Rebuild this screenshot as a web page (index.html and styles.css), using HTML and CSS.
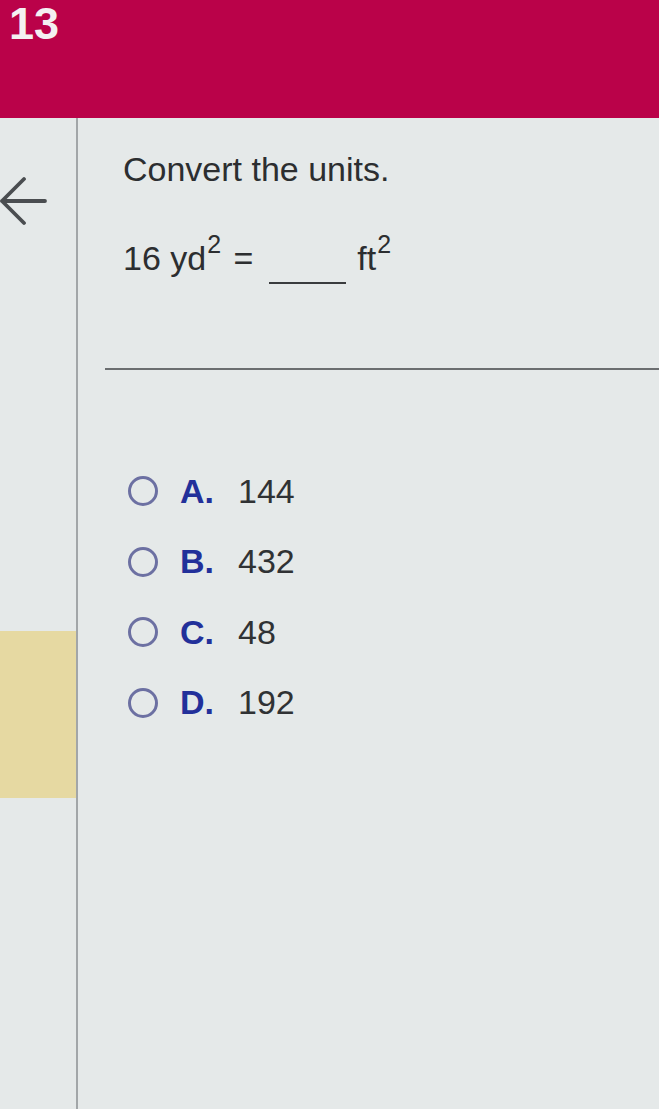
FILE: index.html
```html
<!DOCTYPE html>
<html>
<head>
<meta charset="utf-8">
<link rel="stylesheet" href="styles.css">
</head>
<body>
<header class="topbar"><span class="qnum">13</span></header>
<div class="layout">
  <aside class="sidebar">
    <svg class="back" width="50" height="60" viewBox="0 0 50 60">
      <path d="M46 26 H3 M25 4 L3 26 L25 48" fill="none" stroke="#4a4d50" stroke-width="3.8" stroke-linecap="round" stroke-linejoin="round"/>
    </svg>
    <div class="flag"></div>
  </aside>
  <main class="content">
    <p class="prompt">Convert the units.</p>
    <p class="equation">16 yd<sup>2</sup> = <span class="blank"></span> ft<sup>2</sup></p>
    <hr class="rule">
    <ul class="options">
      <li class="opt"><span class="radio"></span><span class="letter">A.</span><span class="val">144</span></li>
      <li class="opt"><span class="radio"></span><span class="letter">B.</span><span class="val">432</span></li>
      <li class="opt"><span class="radio"></span><span class="letter">C.</span><span class="val">48</span></li>
      <li class="opt"><span class="radio"></span><span class="letter">D.</span><span class="val">192</span></li>
    </ul>
  </main>
</div>
</body>
</html>
```
FILE: styles.css
```css
html, body {
  margin: 0;
  padding: 0;
  height: 100%;
}
body {
  background: #e5e9e9;
  font-family: "Liberation Sans", Arial, sans-serif;
  color: #2f3133;
  overflow: hidden;
}
.topbar {
  height: 118px;
  background: #ba0249;
  padding: 0 0 0 9px;
  box-sizing: border-box;
}
.qnum {
  color: #f4f0f2;
  font-weight: bold;
  font-size: 45px;
  line-height: 48px;
}
.layout {
  display: flex;
  height: calc(100% - 118px);
}
.sidebar {
  width: 76px;
  flex: none;
  border-right: 2px solid #a2a6a8;
  display: flex;
  flex-direction: column;
}
.back {
  margin-top: 57px;
  margin-left: -1px;
}
.flag {
  margin-top: 396px;
  height: 167px;
  background: #e6d9a2;
}
.content {
  flex: 1;
  padding: 31px 0 0 45px;
}
.prompt {
  margin: 0;
  font-size: 34px;
  line-height: 40px;
  color: #2c2e30;
}
.equation {
  margin: 49px 0 0;
  font-size: 34px;
  line-height: 40px;
  color: #2c2e30;
}
.equation sup {
  font-size: 25px;
  line-height: 0;
  vertical-align: 17px;
  margin-left: 1px;
  margin-right: 3px;
}
.blank {
  display: inline-block;
  width: 77px;
  height: 2px;
  background: #3a3c3e;
  vertical-align: -14px;
  margin: 0 2px 0 6px;
}
.rule {
  margin: 84px 0 0 -18px;
  border: 0;
  height: 2px;
  background: #6b6e70;
}
.options {
  list-style: none;
  margin: 86px 0 0;
  padding: 0;
}
.opt {
  display: flex;
  align-items: center;
  height: 70.5px;
  font-size: 34px;
}
.radio {
  width: 24px;
  height: 24px;
  border: 3px solid #6c70a2;
  border-radius: 50%;
  margin-left: 5px;
  flex: none;
}
.letter {
  width: 58px;
  margin-left: 22px;
  font-weight: bold;
  color: #22309a;
}
.val {
  color: #303234;
}
```
